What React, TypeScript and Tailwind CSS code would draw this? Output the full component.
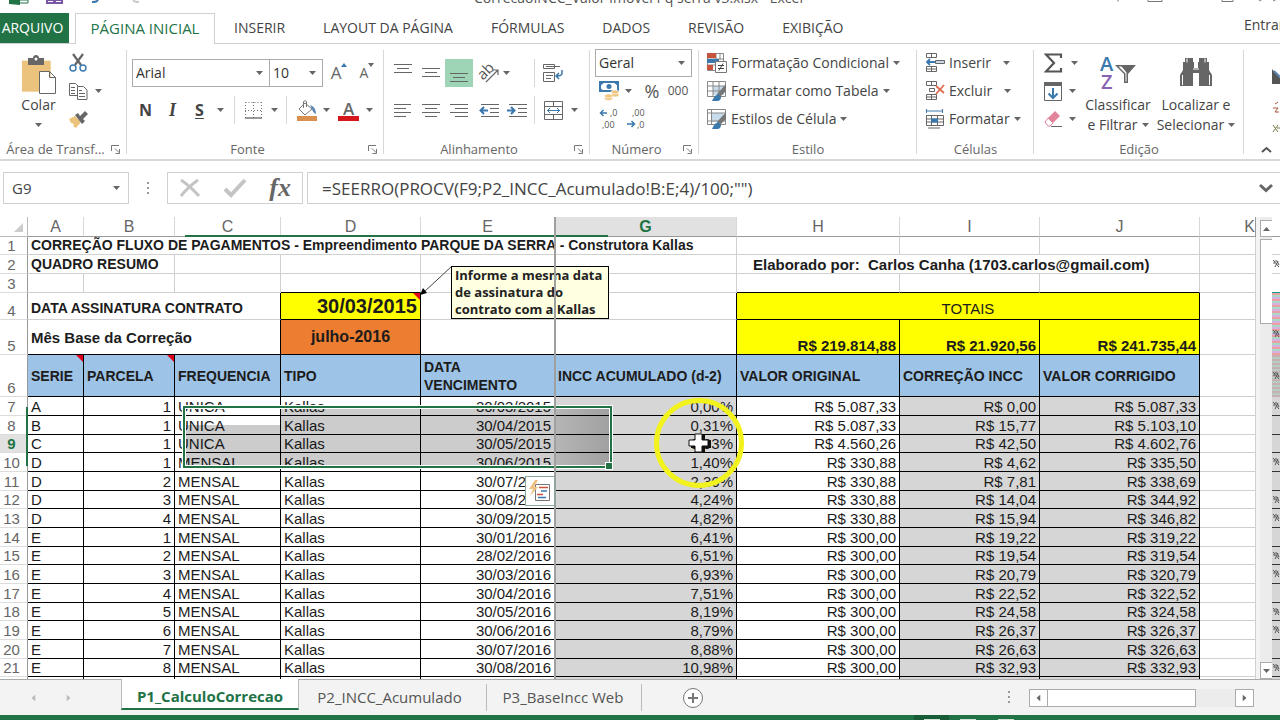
import type { ReactNode } from "react";
import { useState } from "react";

const UI_FONT = "font-['Open_Sans','Noto_Sans',sans-serif]";
const CELL_FONT = "font-['Liberation_Sans',Arial,sans-serif]";

const TABS = ["INSERIR", "LAYOUT DA PÁGINA", "FÓRMULAS", "DADOS", "REVISÃO", "EXIBIÇÃO"];

const INSTALLMENTS = [
	["A", "1", "UNICA", "Kallas", "30/03/2015", "0,00%", "R$ 5.087,33", "R$ 0,00", "R$ 5.087,33"],
	["B", "1", "UNICA", "Kallas", "30/04/2015", "0,31%", "R$ 5.087,33", "R$ 15,77", "R$ 5.103,10"],
	["C", "1", "UNICA", "Kallas", "30/05/2015", "0,93%", "R$ 4.560,26", "R$ 42,50", "R$ 4.602,76"],
	["D", "1", "MENSAL", "Kallas", "30/06/2015", "1,40%", "R$ 330,88", "R$ 4,62", "R$ 335,50"],
	["D", "2", "MENSAL", "Kallas", "30/07/2015", "2,36%", "R$ 330,88", "R$ 7,81", "R$ 338,69"],
	["D", "3", "MENSAL", "Kallas", "30/08/2015", "4,24%", "R$ 330,88", "R$ 14,04", "R$ 344,92"],
	["D", "4", "MENSAL", "Kallas", "30/09/2015", "4,82%", "R$ 330,88", "R$ 15,94", "R$ 346,82"],
	["E", "1", "MENSAL", "Kallas", "30/01/2016", "6,41%", "R$ 300,00", "R$ 19,22", "R$ 319,22"],
	["E", "2", "MENSAL", "Kallas", "28/02/2016", "6,51%", "R$ 300,00", "R$ 19,54", "R$ 319,54"],
	["E", "3", "MENSAL", "Kallas", "30/03/2016", "6,93%", "R$ 300,00", "R$ 20,79", "R$ 320,79"],
	["E", "4", "MENSAL", "Kallas", "30/04/2016", "7,51%", "R$ 300,00", "R$ 22,52", "R$ 322,52"],
	["E", "5", "MENSAL", "Kallas", "30/05/2016", "8,19%", "R$ 300,00", "R$ 24,58", "R$ 324,58"],
	["E", "6", "MENSAL", "Kallas", "30/06/2016", "8,79%", "R$ 300,00", "R$ 26,37", "R$ 326,37"],
	["E", "7", "MENSAL", "Kallas", "30/07/2016", "8,88%", "R$ 300,00", "R$ 26,63", "R$ 326,63"],
	["E", "8", "MENSAL", "Kallas", "30/08/2016", "10,98%", "R$ 300,00", "R$ 32,93", "R$ 332,93"],
];

const BODY_CELL = [
	"text-left",
	"text-right",
	"text-left",
	"text-left",
	"text-right",
	"text-right bg-[#d6d6d6]",
	"text-right",
	"text-right bg-[#d6d6d6]",
	"text-right bg-[#d6d6d6]",
];

const COLUMNS = ["A", "B", "C", "D", "E", "G", "H", "I", "J"];

function Caret({ className = "" }: { className?: string }) {
	return (
		<svg width="7" height="4" viewBox="0 0 7 4" className={`shrink-0 ${className}`} aria-hidden="true">
			<path d="M0 0h7L3.5 4z" fill="#666" />
		</svg>
	);
}

function Launcher() {
	return (
		<svg width="10" height="9" viewBox="0 0 10 9" fill="none" stroke="#777" aria-hidden="true">
			<path d="M.5 6V.5H8M4 3.5l4 4M8.500 4v4.500H4.500" />
		</svg>
	);
}

function Group({
	label,
	width,
	launcher,
	children,
}: {
	label: string;
	width: string;
	launcher?: boolean;
	children: ReactNode;
}) {
	return (
		<section className={`relative flex shrink-0 flex-col ${width}`} aria-label={label}>
			<div className="h-[95px]">{children}</div>
			<div className="flex h-5 items-center text-[13px] leading-5 text-[#666]">
				<span className="flex-1 whitespace-nowrap text-center">{label}</span>
				{launcher && (
					<button type="button" aria-label={`Opções de ${label}`} className="mr-1.5">
						<Launcher />
					</button>
				)}
			</div>
			<span className="absolute right-0 top-1.5 h-[104px] w-px bg-[#d8d8d8]" />
		</section>
	);
}

function IconButton({
	label,
	className = "w-7",
	children,
}: {
	label: string;
	className?: string;
	children: ReactNode;
}) {
	return (
		<button
			type="button"
			aria-label={label}
			className={`flex h-7 shrink-0 items-center justify-center ${className}`}
		>
			{children}
		</button>
	);
}

function Combo({ label, value, className }: { label: string; value: string; className: string }) {
	return (
		<div className={`relative flex h-7 shrink-0 items-center border border-[#ababab] ${className}`}>
			<select
				aria-label={label}
				defaultValue={value}
				className="h-full w-full appearance-none bg-transparent pl-[3px] text-sm text-[#333] outline-none"
			>
				<option>{value}</option>
			</select>
			<Caret className="pointer-events-none absolute right-1.5" />
		</div>
	);
}

function Lines({ rows }: { rows: [number, number, number][] }) {
	return (
		<svg width="18" height="18" viewBox="0 0 18 18" stroke="#666" aria-hidden="true">
			{rows.map(([x1, x2, y]) => (
				<path key={y} d={`M${x1} ${y + 0.5}H${x2}`} />
			))}
		</svg>
	);
}

function ClipboardGroup() {
	return (
		<Group label="Área de Transf..." width="w-[127px]" launcher>
			<div className="flex pl-[17px] pt-[5px]">
				<button type="button" className="flex w-[43px] flex-col items-center text-sm leading-5 text-[#444]">
					<svg width="37" height="40" viewBox="0 0 37 40" className="mt-1.5" aria-hidden="true">
						<path d="M2 6h30v33H2z" transform="scale(.96 .94)" fill="#ebc37c" />
						<path d="M8 3h5c0-4 6-4 6 0h5v7H8z" fill="#666" />
						<circle cx="16" cy="4" r="1.500" fill="#fff" />
						<path d="M19.500 16.500h10l6 6v16h-16zM29.500 16.500v6h6" fill="#fff" stroke="#666" />
					</svg>
					<span>Colar</span>
					<Caret className="mt-2" />
				</button>
				<div className="ml-1 flex flex-col">
					<IconButton label="Recortar">
						<svg width="18" height="20" viewBox="0 0 18 20" fill="none" aria-hidden="true">
							<path d="M4 1l8 11M14 1L6 12" stroke="#666" strokeWidth="2.200" />
							<circle cx="4" cy="15" r="3" stroke="#3b78ad" strokeWidth="1.400" />
							<circle cx="14" cy="15" r="3" stroke="#3b78ad" strokeWidth="1.400" />
						</svg>
					</IconButton>
					<div className="flex items-center gap-[3px]">
						<IconButton label="Copiar">
							<svg width="20" height="18" viewBox="0 0 20 18" stroke="#666" aria-hidden="true">
								<path d="M1.500 1.500h6l3 3v9h-9z" fill="#fff" />
								<path d="M3 5.500h4M3 8.500h4M3 11.500h4" />
								<path d="M9.500 4.500h6l3.500 3.500v9.500H9.500z" fill="#fff" />
								<path d="M11 8.500h3M11 11.500h6M11 14.500h6" />
							</svg>
						</IconButton>
						<Caret />
					</div>
					<IconButton label="Pincel de Formatação">
						<svg width="20" height="18" viewBox="0 0 20 18" aria-hidden="true">
							<path d="M1 9l6-3 6 6-5 6-3-2 1-2-3-1z" fill="#ebc37c" />
							<path d="M7 5l3-2 2 3 5-5 3 3-5 5 2 2-3 3z" fill="#666" />
						</svg>
					</IconButton>
				</div>
			</div>
		</Group>
	);
}

function FontGroup() {
	return (
		<Group label="Fonte" width="w-[257px]" launcher>
			<div className="flex flex-col gap-[9px] pl-[5px] pt-[15px]">
				<div className="flex">
					<Combo label="Fonte" value="Arial" className="w-[138px]" />
					<Combo label="Tamanho da fonte" value="10" className="-ml-px w-[54px]" />
					<IconButton label="Aumentar fonte" className="ml-0.5 w-7 text-[17px] text-[#666]">
						A
						<svg width="6" height="4" viewBox="0 0 6 4" className="mb-4" aria-hidden="true">
							<path d="M0 4h6L3 0z" fill="#3b78ad" />
						</svg>
					</IconButton>
					<IconButton label="Diminuir fonte" className="w-7 text-sm text-[#666]">
						A
						<svg width="6" height="4" viewBox="0 0 6 4" className="mb-4" aria-hidden="true">
							<path d="M0 0h6L3 4z" fill="#666" />
						</svg>
					</IconButton>
				</div>
				<div className="flex items-center text-base text-[#444]">
					<IconButton label="Negrito" className="w-[27px] font-bold">N</IconButton>
					<IconButton label="Itálico" className="w-[27px] font-['Liberation_Serif',serif] text-lg font-bold italic">
						I
					</IconButton>
					<IconButton label="Sublinhado" className="w-[27px] font-bold underline underline-offset-2">S</IconButton>
					<Caret className="ml-1" />
					<span className="ml-2.5 h-7 w-px bg-[#d8d8d8]" />
					<IconButton label="Bordas" className="ml-1 w-7">
						<svg width="17" height="17" viewBox="0 0 17 17" stroke="#777" aria-hidden="true">
							<path d="M.5 .5h16M8.500 0v16M.5 0v16M16.500 0v16M0 8.500h16" strokeDasharray="1 2" />
							<path d="M0 16h17" strokeWidth="1.500" />
						</svg>
					</IconButton>
					<Caret className="ml-1" />
					<span className="ml-2 h-7 w-px bg-[#d8d8d8]" />
					<IconButton label="Cor de preenchimento" className="ml-1.5 w-7">
						<svg width="22" height="21" viewBox="0 0 22 21" aria-hidden="true">
							<path d="M9 3l7 6-7 6-6-6z" fill="#fff" stroke="#777" />
							<path d="M7.500 8V1.500q2-1.500 3 0V7" fill="none" stroke="#777" />
							<path d="M14 5q6 2 6 9-3-1-4-5z" fill="#5a86b5" />
							<path d="M1 16h20v5H1z" fill="#d98f4e" />
						</svg>
					</IconButton>
					<Caret className="ml-0.5" />
					<IconButton label="Cor da fonte" className="ml-1.5 w-6">
						<svg width="21" height="21" viewBox="0 0 21 21" aria-hidden="true">
							<text x="10.500" y="15" textAnchor="middle" fontSize="17" fontWeight="600" fill="#666">A</text>
							<path d="M0 16h21v5H0z" fill="#d5171b" />
						</svg>
					</IconButton>
					<Caret className="ml-1.5" />
				</div>
			</div>
		</Group>
	);
}

function AlignmentGroup() {
	return (
		<Group label="Alinhamento" width="w-[206px]" launcher>
			<div className="flex flex-col gap-[9px] pl-[5px] pt-[15px]">
				<div className="flex items-center">
					<IconButton label="Alinhar em cima"><Lines rows={[[0, 18, 0], [3, 15, 4], [0, 18, 8]]} /></IconButton>
					<IconButton label="Alinhar no meio"><Lines rows={[[0, 18, 4], [3, 15, 8], [0, 18, 12]]} /></IconButton>
					<IconButton label="Alinhar embaixo" className="w-7 bg-[#9fd5b7]">
						<Lines rows={[[0, 18, 9], [3, 15, 13], [0, 18, 17]]} />
					</IconButton>
					<IconButton label="Orientação" className="ml-0.5 w-7">
						<svg width="22" height="20" viewBox="0 0 22 20" aria-hidden="true">
							<text x="0" y="14" fontSize="15" fill="#555" transform="rotate(-45 7 10)">ab</text>
							<path d="M8 19L20 7M15 7h5v5" fill="none" stroke="#666" strokeWidth="1.200" />
						</svg>
					</IconButton>
					<Caret />
					<span className="ml-6 h-7 w-px bg-[#d8d8d8]" />
					<IconButton label="Quebrar texto automaticamente" className="ml-1 w-7">
						<svg width="20" height="20" viewBox="0 0 20 20" fill="none" stroke="#666" aria-hidden="true">
							<path d="M.5 1.500h11v4H.5zM3 3.500h14M.5 9.500h11v9H.5zM3 12.500h7M3 15.500h5" />
							<path d="M19 7v3q0 3-5 3M16 10l-3 3 3 3" stroke="#3b78ad" strokeWidth="1.500" />
						</svg>
					</IconButton>
				</div>
				<div className="flex items-center">
					<IconButton label="Alinhar à esquerda"><Lines rows={[[0, 17, 3], [0, 12, 7], [0, 17, 11], [0, 12, 15]]} /></IconButton>
					<IconButton label="Centralizar"><Lines rows={[[0, 18, 3], [3, 15, 7], [0, 18, 11], [3, 15, 15]]} /></IconButton>
					<IconButton label="Alinhar à direita"><Lines rows={[[0, 18, 3], [5, 18, 7], [0, 18, 11], [5, 18, 15]]} /></IconButton>
					<IconButton label="Diminuir recuo" className="ml-0.5 w-7">
						<svg width="20" height="14" viewBox="0 0 20 14" fill="none" stroke="#666" aria-hidden="true">
							<path d="M2 1.500h18M11 5.500h9M11 9.500h9M2 13.500h18" />
							<path d="M9 7.500H2M5 4L1.500 7.500 5 11" stroke="#3b78ad" strokeWidth="2" />
						</svg>
					</IconButton>
					<IconButton label="Aumentar recuo">
						<svg width="20" height="14" viewBox="0 0 20 14" fill="none" stroke="#666" aria-hidden="true">
							<path d="M2 1.500h18M11 5.500h9M11 9.500h9M2 13.500h18" />
							<path d="M0 7.500h7M4 4l3.500 3.500L4 11" stroke="#3b78ad" strokeWidth="2" />
						</svg>
					</IconButton>
					<span className="ml-[3px] h-7 w-px bg-[#d8d8d8]" />
					<IconButton label="Mesclar e centralizar" className="ml-1 w-7">
						<svg width="19" height="19" viewBox="0 0 19 19" fill="none" stroke="#666" aria-hidden="true">
							<path d="M.5 .5h18v18H.5zM.5 5.500h18M.5 13.500h18M9.500 .5v5M9.500 13.500v5" />
							<path d="M3 9.500h13M6 7L3.500 9.500 6 12M13 7l2.500 2.500L13 12" stroke="#3b78ad" />
						</svg>
					</IconButton>
					<Caret className="ml-1" />
				</div>
			</div>
		</Group>
	);
}

function NumberGroup() {
	return (
		<Group label="Número" width="w-[109px]" launcher>
			<div className="flex flex-col pl-[5px] pt-[5px]">
				<Combo label="Formato de número" value="Geral" className="w-[97px]" />
				<div className="flex items-center text-[#555]">
					<IconButton label="Formato de contabilização">
						<svg width="21" height="20" viewBox="0 0 21 20" aria-hidden="true">
							<path d="M1 1h18v9H1z" fill="#fff" stroke="#3b78ad" strokeWidth="2" />
							<path d="M1 1h5L1 5zM19 1h-5l5 4zM1 10V7l4 3z" fill="#3b78ad" />
							<circle cx="10" cy="5.500" r="2.500" fill="#3b78ad" />
							<g fill="#f2c37d" stroke="#fff" strokeWidth=".7">
								<ellipse cx="16" cy="14" rx="4" ry="2" />
								<ellipse cx="16" cy="11" rx="4" ry="2" />
								<ellipse cx="9.500" cy="17.500" rx="4" ry="2" />
								<ellipse cx="9.500" cy="15" rx="4" ry="2" />
							</g>
						</svg>
					</IconButton>
					<Caret className="ml-0.5" />
					<IconButton label="Estilo de porcentagem" className="ml-1.5 w-7 text-lg">%</IconButton>
					<IconButton label="Separador de milhares" className="w-6 text-xs">000</IconButton>
				</div>
				<div className="flex">
					<IconButton label="Aumentar casas decimais">
						<svg width="20" height="20" viewBox="0 0 20 20" fontSize="9" fill="#555" aria-hidden="true">
							<text x="11" y="7">,0</text>
							<text x="3" y="19">,00</text>
							<path d="M8 4H2M4.500 1L1.500 4l3 3" fill="none" stroke="#3b78ad" strokeWidth="1.500" />
						</svg>
					</IconButton>
					<IconButton label="Diminuir casas decimais">
						<svg width="20" height="20" viewBox="0 0 20 20" fontSize="9" fill="#555" aria-hidden="true">
							<text x="5" y="7">,00</text>
							<text x="10" y="19">,0</text>
							<path d="M0 15h7M4.500 12l3 3-3 3" fill="none" stroke="#3b78ad" strokeWidth="1.500" />
						</svg>
					</IconButton>
				</div>
			</div>
		</Group>
	);
}

function MenuButton({ icon, label, gap = "ml-1" }: { icon: ReactNode; label: string; gap?: string }) {
	return (
		<button type="button" className="flex h-7 items-center whitespace-nowrap text-sm text-[#444]">
			<span className="mr-1 flex w-5 justify-center">{icon}</span>
			{label}
			<Caret className={gap} />
		</button>
	);
}

function StyleGroup() {
	return (
		<Group label="Estilo" width="w-[218px]">
			<div className="flex flex-col pl-2 pt-[5px]">
				<MenuButton
					label="Formatação Condicional"
					icon={
						<svg width="20" height="20" viewBox="0 0 20 20" fill="none" aria-hidden="true">
							<path d="M.5 .5h16v17H.5zM9 .5v8M13 .5v6M.5 6h16M.5 12h8" stroke="#888" />
							<path d="M0 0h9v5H0zM0 12h6v5H0z" fill="#c8533c" />
							<path d="M0 6h12v4H0z" fill="#3b78ad" />
							<path d="M8.500 8.500h11v11h-11z" fill="#fff" stroke="#777" />
							<path d="M11 12.500h6M11 15.500h6M16 10.500l-4 7" stroke="#444" />
						</svg>
					}
				/>
				<MenuButton
					label="Formatar como Tabela"
					icon={
						<svg width="20" height="20" viewBox="0 0 20 20" fill="none" aria-hidden="true">
							<path d="M6 5h11v9H6z" fill="#c9dcec" />
							<path d="M.5 .5h18v15H.5zM.5 5h18M.5 10h18M6 .5v15M12 .5v15" stroke="#888" />
							<path d="M19 3v7l-6 6-3-3z" fill="#777" />
							<path d="M5 20q2-5 6-7l3 3q0 3-3 4z" fill="#3b78ad" />
						</svg>
					}
				/>
				<MenuButton
					label="Estilos de Célula"
					icon={
						<svg width="20" height="20" viewBox="0 0 20 20" fill="none" aria-hidden="true">
							<path d="M4 4h12v9H4z" fill="#c9dcec" />
							<path d="M.5 .5h18v15H.5zM.5 4h18M.5 12h18M4.500 .5v15" stroke="#888" />
							<path d="M19 3v7l-6 6-3-3z" fill="#777" />
							<path d="M5 20q2-5 6-7l3 3q0 3-3 4z" fill="#3b78ad" />
						</svg>
					}
				/>
			</div>
		</Group>
	);
}

function CellsGroup() {
	return (
		<Group label="Células" width="w-[117px]">
			<div className="flex flex-col pl-2 pt-[5px]">
				<MenuButton
					label="Inserir"
					gap="ml-3"
					icon={
						<svg width="20" height="20" viewBox="0 0 20 20" fill="none" stroke="#666" aria-hidden="true">
							<path d="M1.500 .5h10v4h-10zM6.500 .5v4M1.500 13.500h10v5h-10zM6.500 13.500v5M1.500 16h10" />
							<path d="M10.500 7.500h9v3h-9z" fill="#ccd9e5" />
							<path d="M10 9H2M5 6L2 9l3 3" stroke="#3b78ad" strokeWidth="1.800" />
						</svg>
					}
				/>
				<MenuButton
					label="Excluir"
					gap="ml-3"
					icon={
						<svg width="20" height="20" viewBox="0 0 20 20" fill="none" stroke="#666" aria-hidden="true">
							<path d="M1.500 .5h10v4h-10zM6.500 .5v4M1.500 13.500h10v5h-10zM6.500 13.500v5M1.500 16h10M4.500 7.500h5v3h-5z" />
							<path d="M11 5l8 7M19 4l-8 9" stroke="#dd6b4d" strokeWidth="1.800" />
						</svg>
					}
				/>
				<MenuButton
					label="Formatar"
					icon={
						<svg width="20" height="20" viewBox="0 0 20 20" fill="none" stroke="#666" aria-hidden="true">
							<path d="M2 2h15M1.500 0v4M17.500 0v4" stroke="#3b78ad" />
							<path d="M1.500 6.500h17v10h-17zM1.500 10h17M1.500 13h17M6.500 6.500v10M12.500 6.500v10M3 19h12" />
							<path d="M6 9.500h7v4H6z" fill="#3b78ad" stroke="none" />
						</svg>
					}
				/>
			</div>
		</Group>
	);
}

function EditingGroup() {
	return (
		<Group label="Edição" width="w-[210px]">
			<div className="flex pl-1.5 pt-[5px]">
				<div className="flex flex-col">
					<button type="button" aria-label="AutoSoma" className="flex h-7 w-[42px] items-center justify-between pl-1">
						<svg width="20" height="20" viewBox="0 0 20 20" fill="none" aria-hidden="true">
							<path d="M17 5V1.500H2L10 10l-8 8.500h15V15" stroke="#555" strokeWidth="2.200" />
						</svg>
						<Caret className="mr-1" />
					</button>
					<button type="button" aria-label="Preencher" className="flex h-7 w-[42px] items-center justify-between pl-1">
						<svg width="18" height="19" viewBox="0 0 18 19" fill="none" aria-hidden="true">
							<path d="M.5 .5h17v18H.5z" fill="#fff" stroke="#666" />
							<path d="M0 0h18v4H0z" fill="#666" />
							<path d="M9 6v10M4.500 11.500L9 16l4.500-4.500" stroke="#3b78ad" strokeWidth="2" />
						</svg>
						<Caret className="mr-1.5" />
					</button>
					<button type="button" aria-label="Limpar" className="flex h-7 w-[42px] items-center justify-between pl-1">
						<svg width="19" height="16" viewBox="0 0 19 16" aria-hidden="true">
							<path d="M11 0l5 5-7 7-5-5z" fill="#e2849a" />
							<path d="M4 7l5 5-3 3H4l-3-4z" fill="#fff" stroke="#e2849a" />
							<path d="M7 15.500h11" stroke="#666" />
						</svg>
						<Caret className="mr-1.5" />
					</button>
				</div>
				<button type="button" className="flex w-[72px] flex-col items-center whitespace-nowrap text-sm leading-5 text-[#444]">
					<svg width="36" height="36" viewBox="0 0 36 36" className="mb-1 mt-1.5" aria-hidden="true">
						<text x="0" y="16" fontSize="20" fontWeight="600" fill="#3b78ad">A</text>
						<text x="1" y="34" fontSize="20" fontWeight="600" fill="#8a63b0">Z</text>
						<path d="M15 10h21l-8 9v9h-4v-9z" fill="#666" />
						<path d="M18.500 11.500h3l5 6v9h-1v-8z" fill="#fff" />
					</svg>
					<span>Classificar</span>
					<span className="flex items-center gap-1">
						e Filtrar <Caret />
					</span>
				</button>
				<button type="button" className="ml-0.5 flex w-[80px] flex-col items-center whitespace-nowrap text-sm leading-5 text-[#444]">
					<svg width="34" height="30" viewBox="0 0 34 30" className="mb-2 mt-2" fill="#666" aria-hidden="true">
						<path d="M6 1h8v4h1v6h4V5h1V1h8v4h2v8l3 5v11H20V16h-6v13H1V18l3-5V5h2z" />
						<path d="M8 1.500v4M26 1.500v4M3.500 18v10M30.500 18v10M14 12h6" stroke="#fff" />
					</svg>
					<span>Localizar e</span>
					<span className="flex items-center gap-1">
						Selecionar <Caret />
					</span>
				</button>
			</div>
		</Group>
	);
}

function TitleBar() {
	return (
		<header className="flex h-[13px] items-end overflow-hidden bg-white">
			<svg width="190" height="13" viewBox="0 0 190 13" fill="none" className="shrink-0" aria-hidden="true">
				<path d="M9 0h11v5l-11-1z" fill="#217346" />
				<path d="M20 0h8v3h-8" stroke="#217346" />
				<path d="M47 0h15v3H47z" stroke="#7a57a5" strokeWidth="2" />
				<path d="M53 0h3v3h-3z" fill="#7a57a5" />
				<path d="M92 2q5 0 6-2" stroke="#3b78ad" strokeWidth="2" />
				<path d="M139 2q-5 0-6-2" stroke="#ccc" strokeWidth="2" />
			</svg>
			<h1 className="flex h-[13px] flex-1 items-end justify-center pr-7 text-sm leading-[22px] text-[#555]">
				<span className="-translate-y-1">CorrecaoINCC_Valor Imóvel Pq serra v3.xlsx - Excel</span>
			</h1>
			<svg width="165" height="13" viewBox="0 0 165 13" fill="none" stroke="#777" className="shrink-0" aria-hidden="true">
				<path d="M3 0v1.500M33 0v1.500h14V0M107 0v1.500h11V0M144 1l4-2M158 1l4-2" />
			</svg>
		</header>
	);
}

function RibbonTabs() {
	return (
		<nav className="flex h-[31px] items-stretch border-b border-[#d0d0d0] text-sm text-[#444]">
			<button type="button" className="w-[69px] bg-[#217346] pr-1 text-white">
				ARQUIVO
			</button>
			<button
				type="button"
				className="-mb-px ml-1.5 w-[140px] border border-b-0 border-[#d0d0d0] bg-white text-[15px] text-[#217346]"
			>
				PÁGINA INICIAL
			</button>
			<div className="flex whitespace-nowrap">
				{TABS.map((tab) => (
					<button key={tab} type="button" className="px-[19px]">
						{tab}
					</button>
				))}
			</div>
			<a href="#entrar" className="ml-auto w-[36px] overflow-hidden whitespace-nowrap pt-0.5">
				Entrar
			</a>
		</nav>
	);
}

function Ribbon() {
	return (
		<div className="flex h-[117px] overflow-hidden border-b-2 border-[#d8d8d8]">
			<ClipboardGroup />
			<FontGroup />
			<AlignmentGroup />
			<NumberGroup />
			<StyleGroup />
			<CellsGroup />
			<EditingGroup />
			<div className="flex flex-1 flex-col items-end justify-between overflow-hidden pt-6">
				<svg width="8" height="70" viewBox="0 0 8 70" fill="none" aria-hidden="true">
					<path d="M0 1l8 9v6H0z" fill="#555" />
					<path d="M2 3l6 6" stroke="#5a86b5" strokeWidth="2" />
					<path d="M1 40h5l-3 4h4M3 36l3-2" stroke="#a6553d" />
					<path d="M1 57l5 7M6 57l-5 7M5 60h3" stroke="#6f7a44" />
				</svg>
				<button type="button" aria-label="Recolher a faixa de opções" className="mb-1.5 mr-2">
					<svg width="11" height="7" viewBox="0 0 11 7" fill="none" aria-hidden="true">
						<path d="M1 6l4.500-4L10 6" stroke="#555" strokeWidth="2" />
					</svg>
				</button>
			</div>
		</div>
	);
}

function FormulaBar() {
	const [formula, setFormula] = useState('=SEERRO(PROCV(F9;P2_INCC_Acumulado!B:E;4)/100;"")');

	return (
		<div className="flex h-14 items-start pt-[11px] text-[17px] text-[#444]">
			<div className="relative ml-[3px] flex h-8 w-[126px] items-center border border-[#d0d0d0]">
				<input
					aria-label="Caixa de nome"
					defaultValue="G9"
					className="h-full w-full bg-transparent pl-2 text-[15px] outline-none"
				/>
				<Caret className="pointer-events-none absolute right-2" />
			</div>
			<svg width="4" height="32" viewBox="0 0 4 32" className="ml-[17px]" fill="#999" aria-hidden="true">
				<path d="M1 10h2v2H1zM1 15h2v2H1zM1 20h2v2H1z" />
			</svg>
			<div className="ml-[17px] flex h-8 w-[136px] items-center justify-around border border-[#d0d0d0]">
				<button type="button" aria-label="Cancelar">
					<svg width="22" height="20" viewBox="0 0 22 20" fill="none" aria-hidden="true">
						<path d="M2 2q9 6 18 16M19 2Q9 9 2 18" stroke="#c4c4c4" strokeWidth="3" />
					</svg>
				</button>
				<button type="button" aria-label="Inserir">
					<svg width="24" height="20" viewBox="0 0 24 20" fill="none" aria-hidden="true">
						<path d="M2 11l6 6L22 2" stroke="#c4c4c4" strokeWidth="4" />
					</svg>
				</button>
				<button
					type="button"
					aria-label="Inserir função"
					className="font-['Liberation_Serif',serif] text-[26px] font-bold italic leading-7 text-[#666]"
				>
					fx
				</button>
			</div>
			<div className="ml-1 flex h-8 flex-1 items-center border border-r-0 border-[#d0d0d0]">
				<input
					aria-label="Barra de fórmulas"
					value={formula}
					onChange={(e) => setFormula(e.target.value)}
					className="h-full flex-1 bg-transparent pl-3.5 outline-none"
				/>
				<button type="button" aria-label="Expandir barra de fórmulas" className="mr-[7px]">
					<svg width="14" height="10" viewBox="0 0 14 10" fill="none" aria-hidden="true">
						<path d="M1 2l6 5.500L13 2" stroke="#666" strokeWidth="3" />
					</svg>
				</button>
			</div>
		</div>
	);
}

const GRID = "border-r border-b border-[#d0d0d0] px-[3px]";
const OPEN = "border-b border-[#d0d0d0] px-[3px]";
const BOX = "border-r border-b border-black px-[3px]";

function RowHeader({ n, active }: { n: number; active?: boolean }) {
	return (
		<th
			scope="row"
			className={`border-b border-r border-b-[#dcdcdc] border-r-[#999] pr-1 text-center align-bottom text-[15px] ${
				active ? "bg-[#e1e1e1] font-bold text-[#217346]" : "font-normal text-[#666]"
			}`}
		>
			{n}
		</th>
	);
}

function HeadCell({ children, note }: { children: ReactNode; note?: boolean }) {
	return (
		<td className={`relative bg-[#9dc3e6] text-sm/[18px] font-bold ${BOX}`}>
			{children}
			{note && <NoteMark />}
		</td>
	);
}

function NoteMark() {
	return (
		<svg width="7" height="7" viewBox="0 0 7 7" className="absolute right-0 top-0" aria-hidden="true">
			<path d="M0 0h7v7z" fill="#e3001b" />
		</svg>
	);
}

function SheetTable() {
	return (
		<table className="w-full table-fixed border-separate border-spacing-0 whitespace-nowrap leading-[17px] text-[#1c1c1c]">
			<colgroup>
				<col className="w-[28px]" />
				<col className="w-[56px]" />
				<col className="w-[91px]" />
				<col className="w-[106px]" />
				<col className="w-[140px]" />
				<col className="w-[134px]" />
				<col className="w-[182px]" />
				<col className="w-[163px]" />
				<col className="w-[140px]" />
				<col className="w-[160px]" />
				<col />
			</colgroup>
			<thead>
				<tr className="h-5 text-base/[19px] text-[#666]">
					<th aria-label="Selecionar tudo" className="border-b border-r border-[#bbb] align-bottom">
						<svg width="9" height="9" viewBox="0 0 9 9" className="mb-1 ml-3.5" aria-hidden="true">
							<path d="M9 0v9H0z" fill="#ccc" />
						</svg>
					</th>
					{COLUMNS.map((c) => (
						<th
							key={c}
							scope="col"
							className={`border-b border-r border-b-[#999] border-r-[#d8d8d8] ${
								c === "G" ? "bg-[#e1e1e1] font-bold text-[#217346]" : "font-normal"
							}`}
						>
							{c}
						</th>
					))}
					<th scope="col" className="border-b border-r border-b-[#999] border-r-[#999] text-right font-normal">
						K
					</th>
				</tr>
			</thead>
			<tbody>
				<tr className="h-[18px] text-sm/[17px] font-bold">
					<RowHeader n={1} />
					<td colSpan={6} className={GRID}>
						CORREÇÃO FLUXO DE PAGAMENTOS - Empreendimento PARQUE DA SERRA - Construtora Kallas
					</td>
					<td className={GRID} />
					<td className={GRID} />
					<td className={GRID} />
					<td className={GRID} />
				</tr>
				<tr className="h-[19px] text-sm/[17px] font-bold">
					<RowHeader n={2} />
					<td colSpan={2} className={GRID}>QUADRO RESUMO</td>
					<td className={GRID} />
					<td className={GRID} />
					<td className={GRID} />
					<td className={GRID} />
					<td colSpan={3} className="border-b border-r border-[#d0d0d0] pl-4 text-[15px]">
						Elaborado por:&nbsp; Carlos Canha (1703.carlos@gmail.com)
					</td>
					<td className={GRID} />
				</tr>
				<tr className="h-[19px]">
					<RowHeader n={3} />
					<td className={GRID} />
					<td className={GRID} />
					<td className={GRID} />
					<td className="border-b border-r border-b-black border-r-[#d0d0d0]" />
					<td className={GRID} />
					<td className={GRID} />
					<td className="border-b border-r border-b-black border-r-[#d0d0d0]" />
					<td className="border-b border-r border-b-black border-r-[#d0d0d0]" />
					<td className="border-b border-r border-b-black border-r-[#d0d0d0]" />
					<td className={GRID} />
				</tr>
				<tr className="h-[27px]">
					<RowHeader n={4} />
					<td colSpan={3} className="border-b border-r border-b-[#d0d0d0] border-r-black px-[3px] pt-1 text-sm/[17px] font-bold">
						DATA ASSINATURA CONTRATO
					</td>
					<td className={`relative bg-[#ffff00] text-right text-xl/6 font-bold ${BOX}`}>
						30/03/2015
						<NoteMark />
					</td>
					<td className={OPEN} />
					<td className="border-b border-r border-b-[#d0d0d0] border-r-black" />
					<td colSpan={3} className={`bg-[#ffff00] pt-1 text-center text-[15px] ${BOX}`}>
						TOTAIS
					</td>
					<td className={GRID} />
				</tr>
				<tr className="h-[35px] text-[15px] font-bold">
					<RowHeader n={5} />
					<td colSpan={3} className="border-b border-r border-black px-[3px]">
						Mês Base da Correção
					</td>
					<td className={`bg-[#ed7d31] text-center text-base ${BOX}`}>julho-2016</td>
					<td className="border-b border-black" />
					<td className="border-b border-r border-black" />
					<td className={`bg-[#ffff00] text-right align-bottom ${BOX}`}>R$ 219.814,88</td>
					<td className={`bg-[#ffff00] text-right align-bottom ${BOX}`}>R$ 21.920,56</td>
					<td className={`bg-[#ffff00] text-right align-bottom ${BOX}`}>R$ 241.735,44</td>
					<td className={GRID} />
				</tr>
				<tr className="h-[42px]">
					<RowHeader n={6} />
					<HeadCell note>SERIE</HeadCell>
					<HeadCell note>PARCELA</HeadCell>
					<HeadCell>FREQUENCIA</HeadCell>
					<HeadCell>TIPO</HeadCell>
					<HeadCell>
						DATA
						<br />
						VENCIMENTO
					</HeadCell>
					<HeadCell>INCC ACUMULADO (d-2)</HeadCell>
					<HeadCell>VALOR ORIGINAL</HeadCell>
					<HeadCell>CORREÇÃO INCC</HeadCell>
					<HeadCell>VALOR CORRIGIDO</HeadCell>
					<td className={GRID} />
				</tr>
				{INSTALLMENTS.map((row, i) => (
					<tr key={i} className={`text-[15px] ${i % 3 === 2 ? "h-[18px]" : "h-[19px]"}`}>
						<RowHeader n={i + 7} active={i === 2} />
						{row.map((value, c) => (
							<td key={c} className={`${BODY_CELL[c]} ${BOX}`}>
								{value}
							</td>
						))}
						<td className={GRID} />
					</tr>
				))}
				<tr className="h-[19px]">
					<td className="border-r border-[#999]" />
					{BODY_CELL.map((cls, c) => (
						<td key={c} className={`${cls} ${BOX}`} />
					))}
					<td className={GRID} />
				</tr>
			</tbody>
		</table>
	);
}

/* Selection, note, quick analysis and pointer float over the cells */
function SheetOverlays() {
	return (
		<div className="pointer-events-none absolute inset-0">
			<span className="absolute left-[185px] top-[18px] h-0.5 w-[423px] bg-[#217346]" />
			<span className="absolute left-[26px] top-[190px] h-[59px] w-0.5 bg-[#217346]" />

			<svg width="34" height="32" viewBox="0 0 34 32" className="absolute left-[420px] top-[48px]" aria-hidden="true">
				<path d="M32 1L3 28" stroke="#444" />
				<path d="M0 30l3-7 4 5z" fill="#000" />
			</svg>
			<p
				className={`absolute left-[451px] top-[49px] w-[158px] border border-black bg-[#ffffe1] px-[3px] text-[13px] font-bold leading-[17px] text-[#222] ${UI_FONT}`}
			>
				Informe a mesma data
				<br />
				de assinatura do
				<br />
				contrato com a Kallas
			</p>

			<div className="absolute left-[183px] top-[189px] h-[62px] w-[429px] border-2 border-[#217346] outline-1 outline-white">
				<div className="flex h-full border border-white">
					<span className="mt-4 w-[94px] bg-black/20" />
					<span className="w-[274px] bg-black/20" />
					<span className="flex-1 bg-linear-to-r from-black/15 to-black/25" />
				</div>
			</div>
			<span className="absolute left-[605px] top-[245px] size-2 border border-white bg-[#217346]" />

			<span className="absolute bottom-0 left-[554px] top-0 w-0.5 bg-[#a0a0a0]" />

			<span className="absolute left-[525px] top-[259px] flex size-[30px] items-center justify-center border border-[#8aa898] bg-white">
				<svg width="24" height="22" viewBox="0 0 24 22" fill="none" aria-hidden="true">
					<path d="M7.500 4.500h14v16h-14z" stroke="#777" />
					<path d="M11 7.500h9" stroke="#c8533c" strokeWidth="1.500" />
					<path d="M13 11h6M10 17.500h8" stroke="#3b78ad" strokeWidth="1.500" />
					<path d="M9 14.500h6" stroke="#c8533c" strokeWidth="1.500" />
					<path d="M7 0L1 9h4l-3 7 8-9H6l4-7z" fill="#f0c080" />
				</svg>
			</span>

			<svg width="92" height="92" viewBox="0 0 92 92" className="absolute left-[653px] top-[180px]" aria-hidden="true">
				<circle cx="46" cy="46" r="42.500" fill="none" stroke="#f2f21c" strokeWidth="5" />
				<path d="M44 38h8v5h6v8h-6v5h-8v-5h-6v-8h6z" fill="#111" />
				<path d="M42 37h7v6h6v6h-6v6h-7v-6h-6v-6h6z" fill="#fff" stroke="#111" />
			</svg>
		</div>
	);
}

function VerticalScroll() {
	return (
		<div className="flex w-6 shrink-0 bg-[#f3f3f3] pl-1">
			<div className="flex w-3 flex-col bg-[#ececec] pt-[3px]">
				<button
					type="button"
					aria-label="Rolar para cima"
					className="flex h-[17px] items-center justify-center border border-r-0 border-[#ababab] bg-white"
				>
					<Caret className="rotate-180" />
				</button>
				<span className="mt-0.5 h-[85px] border border-r-0 border-[#ababab] bg-white" />
				<button
					type="button"
					aria-label="Rolar para baixo"
					className="mt-auto flex h-[17px] items-center justify-center border border-r-0 border-[#ababab] bg-white"
				>
					<Caret />
				</button>
			</div>
			<div className="flex w-2 flex-col overflow-hidden bg-[#d6d6d6]">
				<span className="h-5 border-b border-[#999] bg-white" />
				<span className="h-[18px] border-b border-[#d0d0d0] bg-white" />
				<span className="h-[19px] border-b border-[#d0d0d0] bg-white">
					<Scribble />
				</span>
				<span className="h-[19px] border-b border-[#0a9c80] bg-white" />
				<span className="h-[62px] bg-[repeating-linear-gradient(#e8a0a0_0_2px,#a8d8c8_2px_4px,#d8b0e0_4px_6px)] pt-8">
					<Scribble />
				</span>
				<span className="h-[42px] bg-[repeating-linear-gradient(#c8b0b0_0_2px,#b4ccc4_2px_4px)] pt-3">
					<Scribble />
				</span>
				{INSTALLMENTS.map((_, i) => (
					<span key={i} className={`shrink-0 border-b border-[#333] ${i % 3 === 2 ? "h-[18px]" : "h-[19px]"}`}>
						{i !== 2 && i % 3 !== 1 ? <Scribble /> : null}
					</span>
				))}
			</div>
		</div>
	);
}

function Scribble() {
	return (
		<svg width="8" height="14" viewBox="0 0 8 14" fill="none" stroke="#555" aria-hidden="true">
			<path d="M1 5l6 7M2 9q0-4 3-3l2 4M3 12l3-6" />
		</svg>
	);
}

function SheetTabs() {
	return (
		<div className="flex h-9 items-stretch border-t border-[#ababab] bg-[#f3f3f3] text-[15px] text-[#555]">
			<div className="flex w-[121px] items-center gap-7 pl-[30px]">
				<button type="button" aria-label="Planilha anterior">
					<Caret className="rotate-90 opacity-40" />
				</button>
				<button type="button" aria-label="Próxima planilha">
					<Caret className="-rotate-90 opacity-40" />
				</button>
			</div>
			<button
				type="button"
				className="-mt-px mb-[5px] w-[178px] whitespace-nowrap border-x border-b-2 border-x-[#bbb] border-b-[#217346] bg-white pt-1.5 font-bold text-[#217346]"
			>
				P1_CalculoCorrecao
			</button>
			<button type="button" className="my-1 w-[188px] whitespace-nowrap border-r border-[#bbb] pr-1.5">
				P2_INCC_Acumulado
			</button>
			<button type="button" className="my-1 w-[155px] whitespace-nowrap border-r border-[#bbb] pr-0.5">
				P3_BaseIncc Web
			</button>
			<button type="button" aria-label="Nova planilha" className="ml-10">
				<svg width="22" height="22" viewBox="0 0 22 22" fill="none" stroke="#777" aria-hidden="true">
					<circle cx="11" cy="11" r="9.500" fill="#fff" />
					<path d="M11 6v10M6 11h10" strokeWidth="2" />
				</svg>
			</button>
			<div className="ml-auto flex items-center pr-[26px]">
				<svg width="3" height="14" viewBox="0 0 3 14" className="mr-[18px]" fill="#999" aria-hidden="true">
					<path d="M0 0h2v2H0zM0 5h2v2H0zM0 10h2v2H0z" />
				</svg>
				<div className="flex h-[18px] w-[225px] bg-[#ececec]">
					<button
						type="button"
						aria-label="Rolar para a esquerda"
						className="flex w-[19px] items-center justify-center border border-[#ababab] bg-white"
					>
						<Caret className="rotate-90" />
					</button>
					<span className="w-[148px] border border-l-0 border-[#ababab] bg-white" />
					<button
						type="button"
						aria-label="Rolar para a direita"
						className="ml-auto flex w-[19px] items-center justify-center border border-[#ababab] bg-white"
					>
						<Caret className="-rotate-90" />
					</button>
				</div>
			</div>
		</div>
	);
}

export default function App() {
	return (
		<div className={`flex h-screen flex-col overflow-hidden bg-white ${UI_FONT}`}>
			<TitleBar />
			<RibbonTabs />
			<Ribbon />
			<FormulaBar />
			<main className={`flex min-h-0 flex-1 ${CELL_FONT}`}>
				<div className="relative min-w-0 flex-1 overflow-hidden">
					<SheetTable />
					<SheetOverlays />
				</div>
				<VerticalScroll />
			</main>
			<SheetTabs />
			<footer className="flex h-[5px] shrink-0 justify-end overflow-hidden bg-[#217346] pr-64">
				<svg width="110" height="5" viewBox="0 0 110 5" aria-hidden="true">
					<path d="M0 0h35v5H0z" fill="#185c37" />
					<path d="M10 4h16v1H10zM46 4h16v1H46zM84 4h16v1H84z" fill="#cfe3d7" />
				</svg>
			</footer>
		</div>
	);
}
